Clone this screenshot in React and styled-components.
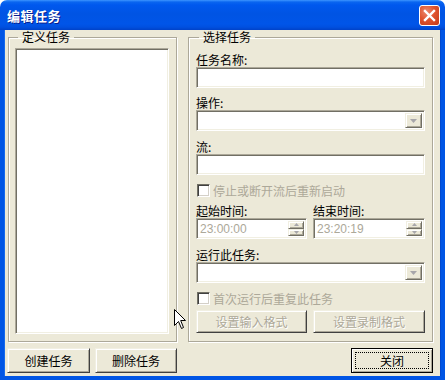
import React from 'react'
import styled, { createGlobalStyle } from 'styled-components'

const GlobalStyle = createGlobalStyle`
  html, body {
    margin: 0;
    padding: 0;
    background: #ffffff;
  }
  body {
    font-family: "Noto Sans CJK SC", "Liberation Sans", sans-serif;
    font-size: 12px;
    color: #000000;
  }
  * { box-sizing: border-box; }
`

const CloseIcon = () => (
  <svg width='13' height='13' viewBox='0 0 13 13'>
    <path d='M2 2 L11 11 M11 2 L2 11' stroke='#ffffff' strokeWidth='2.4' strokeLinecap='square' />
  </svg>
)

const DownArrow = () => (
  <svg width='7' height='4' viewBox='0 0 7 4'>
    <path d='M0 0 H7 L3.5 4 Z' fill='#a7a6aa' />
  </svg>
)

const SmallArrow = ({ up }) => (
  <svg width='5' height='3' viewBox='0 0 5 3'>
    <path d={ up ? 'M0 3 H5 L2.5 0 Z' : 'M0 0 H5 L2.5 3 Z' } fill='#a7a6aa' />
  </svg>
)

const Cursor = () => (
  <CursorWrap>
    <svg width='13' height='21' viewBox='0 0 13 21'>
      <path d='M0.5 0.5 L0.5 16.5 L4.5 12.5 L7.5 19.5 L9.5 18.5 L6.7 11.5 L11.5 11.5 Z'
        fill='#ffffff' stroke='#000000' strokeWidth='1' strokeLinejoin='miter' />
    </svg>
  </CursorWrap>
)

const Combo = () => (
  <ComboBox>
    <ComboField />
    <DropButton><DownArrow /></DropButton>
  </ComboBox>
)

const Spin = ({ value }) => (
  <SpinBox>
    <SpinText>{ value }</SpinText>
    <SpinButtons>
      <SpinButton><SmallArrow up /></SpinButton>
      <SpinButton><SmallArrow /></SpinButton>
    </SpinButtons>
  </SpinBox>
)

export default function App () {
  return (
    <>
      <GlobalStyle />
      <Window>
        <TitleBar>
          <Title>编辑任务</Title>
          <CloseButton><CloseIcon /></CloseButton>
        </TitleBar>
        <Body>
          <Group>
            <Legend>定义任务</Legend>
            <ListBox />
          </Group>
          <Group $wide>
            <Legend>选择任务</Legend>
            <Label>任务名称:</Label>
            <TextBox readOnly value='' />
            <Label $mt={8}>操作:</Label>
            <Combo />
            <Label $mt={9}>流:</Label>
            <TextBox readOnly value='' />
            <CheckRow $mt={7}>
              <CheckBox />
              <span>停止或断开流后重新启动</span>
            </CheckRow>
            <TwoCol $mt={6}>
              <div>
                <Label>起始时间:</Label>
                <Spin value='23:00:00' />
              </div>
              <div>
                <Label>结束时间:</Label>
                <Spin value='23:20:19' />
              </div>
            </TwoCol>
            <Label $mt={9}>运行此任务:</Label>
            <Combo />
            <CheckRow $mt={7}>
              <CheckBox />
              <span>首次运行后重复此任务</span>
            </CheckRow>
            <TwoCol $mt={4}>
              <Button disabled $h={23}>设置输入格式</Button>
              <Button disabled $h={23}>设置录制格式</Button>
            </TwoCol>
          </Group>
          <ButtonRow>
            <Button $w={83}>创建任务</Button>
            <Button $w={82}>删除任务</Button>
            <DefaultButton>
              <FocusRing>关闭</FocusRing>
            </DefaultButton>
          </ButtonRow>
        </Body>
        <Cursor />
      </Window>
    </>
  )
}

const Window = styled.div`
  position: relative;
  width: 445px;
  height: 380px;
  display: flex;
  flex-direction: column;
`
const TitleBar = styled.div`
  height: 30px;
  flex: none;
  display: flex;
  align-items: center;
  justify-content: space-between;
  padding: 0 5px 0 7px;
  border-radius: 7px 7px 0 0;
  background: linear-gradient(to bottom,
    #3d95ff 0px, #0a66f0 2px, #0058ee 5px, #0054e3 14px,
    #0055e8 24px, #0050e0 27px, #0042c8 30px);
`
const Title = styled.div`
  color: #ffffff;
  font-weight: bold;
  font-size: 13px;
  letter-spacing: 0.5px;
  line-height: 16px;
  margin-top: 2px;
  text-shadow: 1px 1px 0 #0a1e8c;
`
const CloseButton = styled.div`
  width: 21px;
  height: 21px;
  border: 1px solid #ffffff;
  border-radius: 3px;
  display: flex;
  align-items: center;
  justify-content: center;
  background: radial-gradient(circle at 35% 30%, #eb8a70 0%, #e0542f 45%, #c33a17 100%);
`
const Body = styled.div`
  flex: 1;
  display: grid;
  grid-template-columns: 169px 245px;
  grid-template-rows: 1fr auto;
  column-gap: 11px;
  row-gap: 6px;
  padding: 0 8px 3px 4px;
  background: #ece9d8;
  border: 4px solid #0055e5;
  border-top: none;
  box-shadow: inset 1px 0 0 #166aee, inset -1px 0 0 #0048d0;
`
const Group = styled.fieldset`
  margin: 0;
  min-width: 0;
  display: flex;
  flex-direction: column;
  padding: ${({ $wide }) => $wide ? '9px 7px 8px 7px' : '4px 7px 7px 6px'};
  border: 1px solid #aca899;
  box-shadow: inset 1px 1px 0 #ffffff, 1px 1px 0 #ffffff;
`
const Legend = styled.legend`
  padding: 0 4px;
  margin-left: 3px;
  line-height: 14px;
  font-size: 12px;
  color: #000000;
`
const ListBox = styled.div`
  flex: 1;
  background: #ffffff;
  border-top: 1px solid #aca899;
  border-left: 1px solid #aca899;
  border-right: 1px solid #ffffff;
  border-bottom: 1px solid #ffffff;
  box-shadow: inset 1px 1px 0 #716f64, inset -1px -1px 0 #f1efe2;
`
const Label = styled.div`
  height: 14px;
  line-height: 14px;
  margin-top: ${({ $mt }) => $mt || 0}px;
  white-space: nowrap;
`
const sunken = `
  background: #ffffff;
  border-top: 1px solid #aca899;
  border-left: 1px solid #aca899;
  border-right: 1px solid #ffffff;
  border-bottom: 1px solid #ffffff;
  box-shadow: inset 1px 1px 0 #716f64, inset -1px -1px 0 #f1efe2;
`
const TextBox = styled.input`
  ${sunken}
  display: block;
  width: 100%;
  height: 21px;
  margin: 0;
  padding: 0 4px;
  outline: none;
  font: inherit;
`
const ComboBox = styled.div`
  ${sunken}
  height: 21px;
  display: flex;
  padding: 2px;
`
const ComboField = styled.div`
  flex: 1;
`
const raised = `
  background: #ece9d8;
  border-top: 1px solid #f1efe2;
  border-left: 1px solid #f1efe2;
  border-right: 1px solid #716f64;
  border-bottom: 1px solid #716f64;
  box-shadow: inset 1px 1px 0 #ffffff, inset -1px -1px 0 #aca899;
`
const DropButton = styled.div`
  ${raised}
  width: 17px;
  display: flex;
  align-items: center;
  justify-content: center;
`
const SpinBox = styled.div`
  ${sunken}
  height: 21px;
  display: flex;
  align-items: stretch;
  padding: 2px 2px 2px 0;
`
const SpinText = styled.div`
  flex: 1;
  padding-left: 3px;
  font-family: "Liberation Sans", Arial, sans-serif;
  font-size: 12px;
  line-height: 17px;
  color: #aca899;
`
const SpinButtons = styled.div`
  width: 16px;
  display: flex;
  flex-direction: column;
`
const SpinButton = styled.div`
  ${raised}
  flex: 1;
  display: flex;
  align-items: center;
  justify-content: center;
`
const CheckRow = styled.div`
  height: 16px;
  display: flex;
  align-items: center;
  gap: 3px;
  margin-top: ${({ $mt }) => $mt || 0}px;
  padding-left: 1px;
  color: #aca899;
  white-space: nowrap;
`
const CheckBox = styled.span`
  width: 13px;
  height: 13px;
  flex: none;
  background: #ffffff;
  border-top: 1px solid #716f64;
  border-left: 1px solid #716f64;
  border-right: 1px solid #ffffff;
  border-bottom: 1px solid #ffffff;
  box-shadow: inset 1px 1px 0 #404040, inset -1px -1px 0 #d4d0c8;
`
const TwoCol = styled.div`
  display: grid;
  grid-template-columns: 111px 112px;
  column-gap: 6px;
  margin-top: ${({ $mt }) => $mt || 0}px;
`
const Button = styled.button`
  ${raised}
  width: ${({ $w }) => $w ? `${$w}px` : '100%'};
  height: ${({ $h }) => $h || 25}px;
  margin: 0;
  padding: 0;
  font-family: inherit;
  font-size: 12px;
  color: #000000;
  border-right-color: #404040;
  border-bottom-color: #404040;
  &:disabled {
    color: #aca899;
    text-shadow: 1px 1px 0 #ffffff;
  }
`
const ButtonRow = styled.div`
  grid-column: 1 / -1;
  display: flex;
  gap: 5px;
  margin-left: -1px;
`
const DefaultButton = styled.div`
  ${raised}
  margin-left: auto;
  width: 82px;
  height: 25px;
  padding: 3px;
  outline: 1px solid #000000;
  outline-offset: -1px;
  border-right-color: #000000;
  border-bottom-color: #000000;
`
const FocusRing = styled.div`
  height: 100%;
  border: 1px dotted #000000;
  display: flex;
  align-items: center;
  justify-content: center;
  font-size: 12px;
`
const CursorWrap = styled.div`
  position: absolute;
  left: 174px;
  top: 309px;
  width: 13px;
  height: 21px;
  pointer-events: none;
`
